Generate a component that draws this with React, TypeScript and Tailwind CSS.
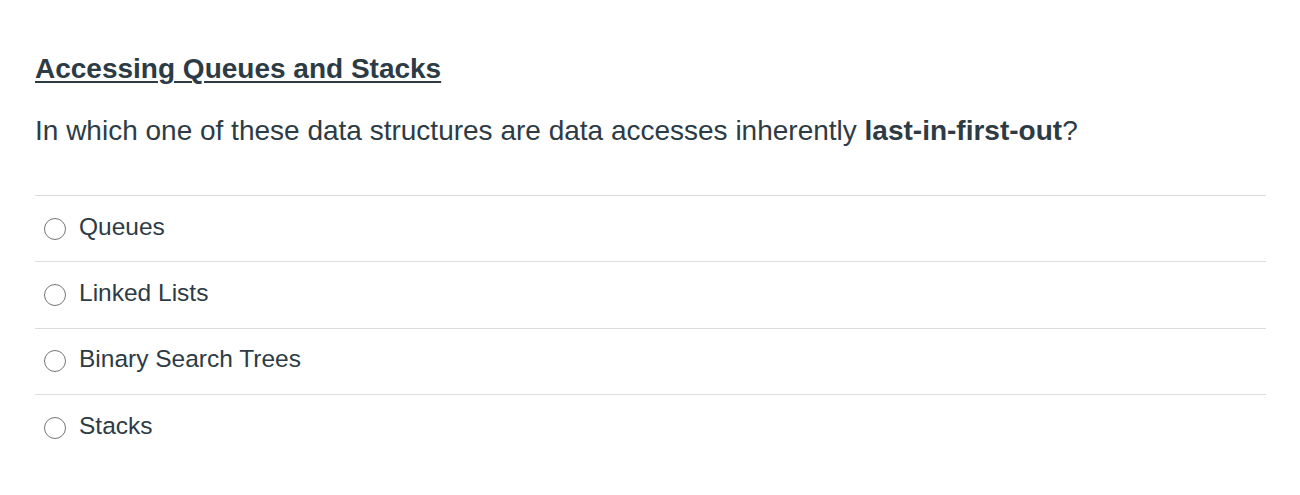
export default function App() {
  const options = ["Queues", "Linked Lists", "Binary Search Trees", "Stacks"];
  return (
    <div className="w-[1300px] h-[495px] bg-white text-[#2d3b45] font-['Liberation_Sans',Arial,sans-serif]">
      <div className="pl-[35px] pr-[34px] pt-[49px]">
        <h2 className="text-[28px] leading-[40px] font-bold underline underline-offset-[3px] decoration-2">
          Accessing Queues and Stacks
        </h2>
        <p className="mt-[22px] text-[28px] leading-[40px]">
          In which one of these data structures are data accesses inherently <strong>last-in-first-out</strong>?
        </p>
        <div className="mt-[44px] border-t border-[#dcdcdc]">
          {options.map((o) => (
            <label key={o} className="flex items-center h-[66.33px] border-b border-[#dcdcdc] last:border-b-0 pl-[9px] gap-[13px] text-[24.5px]">
              <span className="w-[22px] h-[22px] rounded-full border border-[#767676] bg-white shrink-0" />
              <span className="-mt-[3px]">{o}</span>
            </label>
          ))}
        </div>
      </div>
    </div>
  );
}
